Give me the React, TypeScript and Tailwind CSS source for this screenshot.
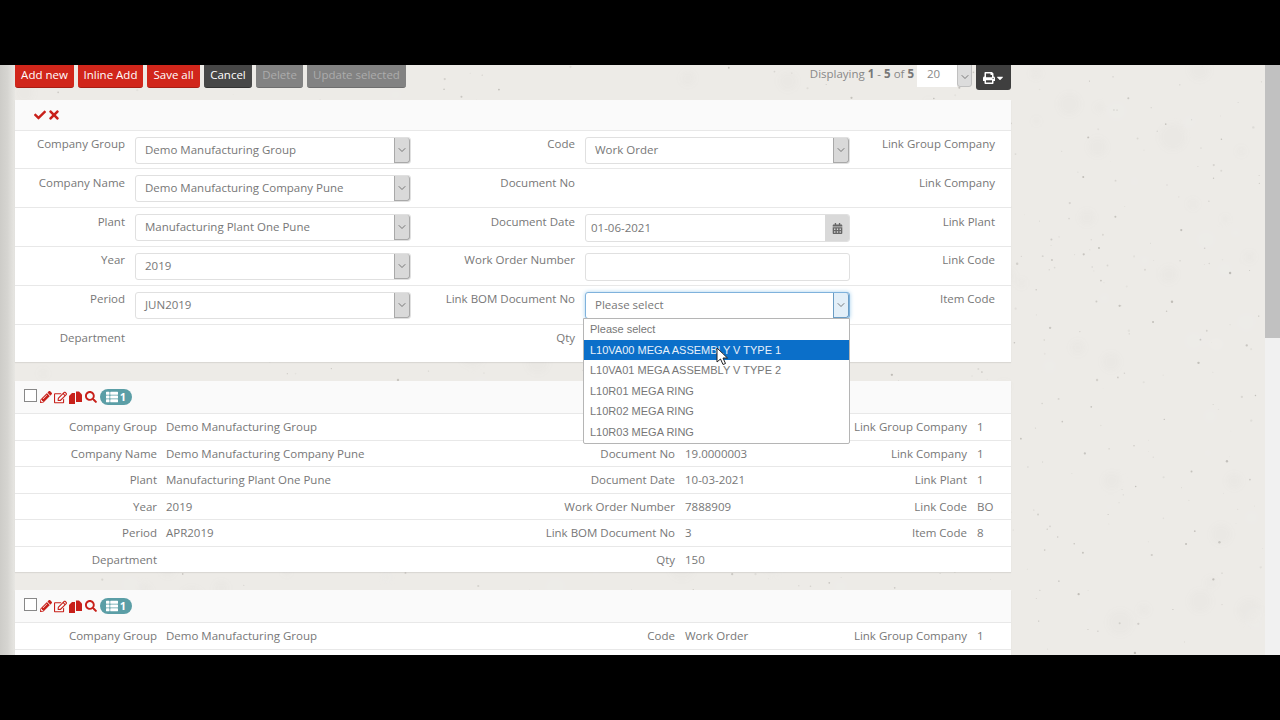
import { ChevronDown } from 'lucide-react';
import {
  FaCalendarAlt,
  FaCaretDown,
  FaCheck,
  FaPencilAlt,
  FaPrint,
  FaRegEdit,
  FaSearch,
  FaThList,
  FaTimes,
} from 'react-icons/fa';

// paper texture, fixed seed so the picture stays the same
let seed = 17;
const next = () => {
  seed = (seed * 16807) % 2147483647;
  return seed / 2147483647;
};
const specks = Array.from({ length: 900 }, () => ({
  x: next() * 1265,
  y: next() * 590,
  r: 0.3 + next() * 0.9,
  o: 0.06 + next() * 0.3,
}));
const blotches = Array.from({ length: 260 }, () => ({
  x: next() * 1265,
  y: next() * 590,
  r: 3 + next() * 11,
  light: next() > 0.5,
}));

const formRows = [
  { l1: 'Company Group', v1: 'Demo Manufacturing Group', l2: 'Code', v2: 'select', t2: 'Work Order', l3: 'Link Group Company' },
  { l1: 'Company Name', v1: 'Demo Manufacturing Company Pune', l2: 'Document No', v2: 'none', t2: '', l3: 'Link Company' },
  { l1: 'Plant', v1: 'Manufacturing Plant One Pune', l2: 'Document Date', v2: 'date', t2: '01-06-2021', l3: 'Link Plant' },
  { l1: 'Year', v1: '2019', l2: 'Work Order Number', v2: 'input', t2: '', l3: 'Link Code' },
  { l1: 'Period', v1: 'JUN2019', l2: 'Link BOM Document No', v2: 'focus', t2: 'Please select', l3: 'Item Code' },
  { l1: 'Department', v1: '', l2: 'Qty', v2: 'none', t2: '', l3: '' },
];

const firstCard = [
  ['Company Group', 'Demo Manufacturing Group', 'Code', 'Work Order', 'Link Group Company', '1'],
  ['Company Name', 'Demo Manufacturing Company Pune', 'Document No', '19.0000003', 'Link Company', '1'],
  ['Plant', 'Manufacturing Plant One Pune', 'Document Date', '10-03-2021', 'Link Plant', '1'],
  ['Year', '2019', 'Work Order Number', '7888909', 'Link Code', 'BO'],
  ['Period', 'APR2019', 'Link BOM Document No', '3', 'Item Code', '8'],
  ['Department', '', 'Qty', '150', '', ''],
];

const secondCard = [firstCard[0], firstCard[1]];

const options = [
  'Please select',
  'L10VA00 MEGA ASSEMBLY V TYPE 1',
  'L10VA01 MEGA ASSEMBLY V TYPE 2',
  'L10R01 MEGA RING',
  'L10R02 MEGA RING',
  'L10R03 MEGA RING',
];

function SelectBox({ text, focus }: { text: string; focus?: boolean }) {
  return (
    <div
      className={`flex h-[27px] w-full items-stretch rounded-[3px] border bg-white ${
        focus ? 'border-[#7fb2dc] shadow-[0_0_4px_#a8d2ee]' : 'border-[#e0e0e0]'
      }`}
    >
      <span className="flex-1 truncate pl-[9px] leading-[24px] text-[#777]">{text}</span>
      <span
        className={`flex w-[16px] items-center justify-center rounded-r-[3px] border-x border-b ${
          focus ? 'border-[#6a9cc4] bg-[#e3eff8]' : 'border-[#a9a9a9] bg-[#d9d9d9]'
        }`}
      >
        <ChevronDown size={12} strokeWidth={1.5} className="text-[#555]" />
      </span>
    </div>
  );
}

function FormRow({ row }: { row: (typeof formRows)[number] }) {
  return (
    <div className="grid h-[38.8px] grid-cols-[110px_286px_164px_275px_145px] items-start border-t border-[#e8e8e8] text-[11.5px]">
      <div className="pt-[4.3px] text-right leading-[17px] text-[#777]">{row.l1}</div>
      <div className="pl-[10px] pt-[6px]">{row.v1 && <SelectBox text={row.v1} />}</div>
      <div className="pt-[4.3px] text-right leading-[17px] text-[#777]">{row.l2}</div>
      <div className="pl-[10px] pt-[6px]">
        {row.v2 === 'select' && <SelectBox text={row.t2} />}
        {row.v2 === 'focus' && <SelectBox text={row.t2} focus />}
        {row.v2 === 'input' && <div className="h-[28px] rounded-[3px] border border-[#e0e0e0] bg-white" />}
        {row.v2 === 'date' && (
          <div className="flex h-[28px] overflow-hidden rounded-[3px] border border-[#e0e0e0] bg-white">
            <span className="flex-1 pl-[5px] leading-[26px] text-[#777]">{row.t2}</span>
            <span className="flex w-[24px] items-center justify-center bg-[#d9d9d9]">
              <FaCalendarAlt size={11} className="text-[#666]" />
            </span>
          </div>
        )}
      </div>
      <div className="pt-[4.3px] text-right leading-[17px] text-[#777]">{row.l3}</div>
    </div>
  );
}

function ViewCard({ rows, className }: { rows: string[][]; className: string }) {
  return (
    <div className={`bg-white shadow-[0_1px_1px_rgba(0,0,0,0.08)] ${className}`}>
      <div className="flex h-[32.4px] items-center bg-[#fafafa] pl-[9px] text-[#c8201a]">
        <span className="-mt-[4px] h-[13px] w-[13px] border border-[#888] bg-white" />
        <FaPencilAlt size={12} className="ml-[3px]" />
        <FaRegEdit size={13} className="ml-[2px]" />
        <svg width="13" height="13" viewBox="0 0 13 13" fill="currentColor" className="ml-[2px]" aria-hidden="true">
          <path d="M0 5 L3 2 H6 V13 H0 Z" />
          <path d="M7 0.5 H10 L13 3.5 V11 H7 Z" />
        </svg>
        <FaSearch size={12} className="ml-[3px]" />
        <span className="ml-[3px] flex h-[16px] w-[32px] items-center justify-center gap-[2px] rounded-full bg-[#5b9ea6] text-[11px] font-bold text-white">
          <FaThList size={12} />1
        </span>
      </div>
      {rows.map((row) => (
        <div
          key={row[0]}
          className="grid h-[26.5px] grid-cols-[142px_342px_176px_115px_177px_1fr] items-center border-t border-[#e8e8e8] text-[11.5px] text-[#777]"
        >
          <div className="text-right">{row[0]}</div>
          <div className="truncate pl-[9px]">{row[1]}</div>
          <div className="text-right">{row[2]}</div>
          <div className="pl-[10px]">{row[3]}</div>
          <div className="text-right">{row[4]}</div>
          <div className="pl-[10px]">{row[5]}</div>
        </div>
      ))}
    </div>
  );
}

export default function App() {
  return (
    <div className="flex h-screen flex-col overflow-hidden bg-black font-['Open_Sans',sans-serif]">
      <div className="h-[65px] shrink-0" />
      <div className="relative flex h-[590px] shrink-0 overflow-hidden">
        <div className="relative h-full w-[1265px] overflow-hidden bg-[#edebe7]">
          <svg className="absolute inset-0 h-full w-full blur-[3px]" aria-hidden="true">
            {blotches.map((b, i) => (
              <circle key={i} cx={b.x} cy={b.y} r={b.r} fill={b.light ? '#ffffff' : '#8a867c'} opacity={b.light ? 0.05 : 0.025} />
            ))}
          </svg>
          <svg className="absolute inset-0 h-full w-full" aria-hidden="true">
            {specks.map((s, i) => (
              <circle key={i} cx={s.x} cy={s.y} r={s.r} fill="#6b675f" opacity={s.o} />
            ))}
          </svg>
          <div className="absolute inset-y-0 left-0 w-[15px] bg-gradient-to-r from-[#cdccc8] via-[#d6d5d1] to-[#e8e7e3]" />

          <div className="relative ml-[15px] w-[996px]">
            <div className="-mt-[5px] flex h-[28px] items-start justify-between text-[11.5px]">
              <div className="flex h-[28px] items-stretch gap-[4px] text-white">
                <button className="w-[59px] rounded-b-[3px] border-b border-[#a81d14] bg-[#d1261b] pt-[2px]">Add new</button>
                <button className="w-[65px] rounded-b-[3px] border-b border-[#a81d14] bg-[#d1261b] pt-[2px]">Inline Add</button>
                <button className="w-[53px] rounded-b-[3px] border-b border-[#a81d14] bg-[#d1261b] pt-[2px]">Save all</button>
                <button className="w-[48px] rounded-b-[3px] border-b border-[#333] bg-[#474747] pt-[2px]">Cancel</button>
                <button className="w-[47px] rounded-b-[3px] border-b border-[#6e6e6e] bg-[#828282] pt-[2px] text-[#acacac]">Delete</button>
                <button className="w-[99px] rounded-b-[3px] border-b border-[#6e6e6e] bg-[#828282] pt-[2px] text-[#acacac]">Update selected</button>
              </div>
              <div className="flex items-start">
                <span className="pt-[5px] text-[#888]">
                  Displaying <b className="font-bold text-[#777]">1</b> - <b className="font-bold text-[#777]">5</b> of{' '}
                  <b className="font-bold text-[#777]">5</b>
                </span>
                <span className="ml-[3px] h-[27px] w-[40px] bg-white pl-[10px] pt-[5px] text-[#888]">20</span>
                <span className="flex h-[27px] w-[15px] items-center justify-center rounded-b-[3px] border border-[#c0c0c0] bg-[#dcdcdc] pt-[6px]">
                  <ChevronDown size={12} strokeWidth={1.5} className="text-[#555]" />
                </span>
                <span className="ml-[4px] flex h-[30px] w-[35px] items-center justify-center rounded-b-[3px] bg-[#3f3f3f] pt-[5px] text-white">
                  <FaPrint size={12} />
                  <FaCaretDown size={10} />
                </span>
              </div>
            </div>

            <div className="mt-[12px] bg-white shadow-[0_1px_1px_rgba(0,0,0,0.08)]">
              <div className="flex h-[29.7px] items-center gap-[1px] bg-[#fafafa] pl-[19px] text-[#c8201a]">
                <FaCheck size={12} />
                <FaTimes size={14} />
              </div>
              {formRows.map((row) => (
                <FormRow key={row.l1} row={row} />
              ))}
            </div>

            <ViewCard rows={firstCard} className="mt-[18.5px]" />
            <ViewCard rows={secondCard} className="mt-[17.6px]" />

            {/* open select list */}
            <div className="absolute left-[568px] top-[258px] w-[267px] rounded-b-[2px] border border-[#b5b5b5] bg-white font-['Liberation_Sans',sans-serif] text-[11px] text-[#777]">
              {options.map((o, i) => (
                <div
                  key={o}
                  className={`h-[20.6px] pl-[6px] leading-[20.6px] ${i === 1 ? 'bg-[#0b6fc9] text-[#e8f1fa]' : ''}`}
                >
                  {o}
                </div>
              ))}
            </div>
            <svg className="absolute left-[701px] top-[287px]" width="13" height="19" viewBox="0 0 13 19" aria-hidden="true">
              <path d="M1 1 L1 15 L4.5 12 L7 17.5 L9.5 16.5 L7 11 L11.5 11 Z" fill="#fff" stroke="#222" strokeWidth="1" />
            </svg>
          </div>
        </div>
        <div className="h-full w-[15px] bg-[#f1f1f1]">
          <div className="h-[273px] bg-[#c1c1c1]" />
        </div>
      </div>
      <div className="flex-1" />
    </div>
  );
}
